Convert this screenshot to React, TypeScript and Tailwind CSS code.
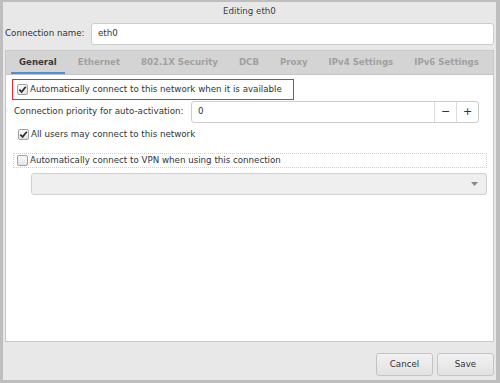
import React from "react";

const Check = ({ checked }: { checked: boolean }) => (
  <span className="w-[11px] h-[11px] border border-[#a0a0a0] rounded-[2px] bg-gradient-to-b from-[#fafafa] to-[#e4e4e4] flex items-center justify-center shrink-0">
    {checked && (
      <svg width="9" height="9" viewBox="0 0 9 9">
        <path d="M1.3 4.6 L3.6 6.9 L7.8 1.8" stroke="#2e2e2e" strokeWidth="1.7" fill="none" />
      </svg>
    )}
  </span>
);

export default function App() {
  const tabs = ["General", "Ethernet", "802.1X Security", "DCB", "Proxy", "IPv4 Settings", "IPv6 Settings"];
  return (
    <div
      className="w-[500px] h-[383px] bg-[#bebebe] pl-[3px] pr-[4px] pt-[2px] pb-[3px] text-[8.7px] text-[#2e3436] whitespace-nowrap"
      style={{ fontFamily: '"DejaVu Sans", sans-serif' }}
    >
      <div className="w-full h-full bg-[#e8e8e8] flex flex-col">
        <div className="h-[19px] flex items-center justify-center text-[#3c3c3c]">Editing eth0</div>
        <div className="flex items-center h-[26px] px-[2px]">
          <span className="w-[86px]">Connection name:</span>
          <div className="flex-1 h-[22px] bg-white border border-[#cdcdcd] rounded-[3px] flex items-center pl-[6px]">eth0</div>
        </div>
        <div className="mt-[3px] mx-[2px] h-[292px] flex flex-col border border-[#c8c8c8]">
          <div className="h-[24px] bg-[#d4d4d4] flex items-stretch pl-[5px] gap-[5px] font-bold text-[8.6px] text-[#a0a0a0] border-b border-[#c4c4c4]">
            {tabs.map((t, i) => (
              <div
                key={t}
                className={
                  i === 0
                    ? "px-[8px] flex items-center text-[#3a3a3a] border-b-[2px] border-[#4a90d9] pt-[2px]"
                    : "px-[8px] flex items-center"
                }
              >
                {t}
              </div>
            ))}
          </div>
          <div className="flex-1 bg-white pt-[4px] pl-[6px]">
            <div className="w-[282px] h-[21px] border border-[#ec2a35] flex items-center gap-[2px] pl-[4px]">
              <Check checked />
              <span>Automatically connect to this network when it is available</span>
            </div>
            <div className="flex items-center h-[22px] mt-[1px]">
              <span className="pl-[2px] w-[179px]">Connection priority for auto-activation:</span>
              <div className="w-[288px] h-[22px] border border-[#cdcdcd] rounded-[3px] flex items-stretch">
                <div className="flex-1 flex items-center pl-[6px]">0</div>
                <div className="w-[22px] border-l border-[#dcdcdc] flex items-center justify-center text-[11px]">−</div>
                <div className="w-[22px] border-l border-[#dcdcdc] flex items-center justify-center text-[11px]">+</div>
              </div>
            </div>
            <div className="flex items-center gap-[2px] h-[23px] pl-[6px]">
              <Check checked />
              <span>All users may connect to this network</span>
            </div>
            <div className="mt-[7px] ml-[1px] w-[474px] h-[15px] border border-dotted border-[#cfcfcf] flex items-center gap-[2px] pl-[3px]">
              <Check checked={false} />
              <span>Automatically connect to VPN when using this connection</span>
            </div>
            <div className="mt-[5px] ml-[19px] w-[456px] h-[22px] bg-[#efefef] border border-[#cfcfcf] rounded-[3px] flex items-center justify-end pr-[8px]">
              <svg width="7" height="4" viewBox="0 0 7 4">
                <path d="M0 0 L7 0 L3.5 4 Z" fill="#8a8a8a" />
              </svg>
            </div>
          </div>
        </div>
        <div className="flex-1 flex items-start justify-end gap-[4px] pr-[2px] pt-[11px]">
          <div className="w-[57px] h-[23px] border border-[#c4c4c4] rounded-[3px] bg-gradient-to-b from-[#f2f2f2] to-[#e2e2e2] flex items-center justify-center">Cancel</div>
          <div className="w-[57px] h-[23px] border border-[#c4c4c4] rounded-[3px] bg-gradient-to-b from-[#f2f2f2] to-[#e2e2e2] flex items-center justify-center">Save</div>
        </div>
      </div>
    </div>
  );
}
